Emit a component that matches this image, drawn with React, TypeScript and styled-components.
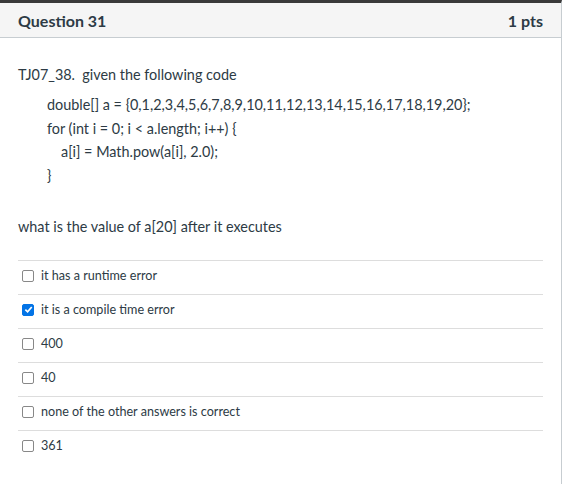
import React from 'react'
import styled, { createGlobalStyle } from 'styled-components'

const GlobalStyle = createGlobalStyle`
  html, body {
    margin: 0;
    padding: 0;
    background: #fff;
  }
  body {
    font-family: Lato, "Open Sans", "Liberation Sans", sans-serif;
    color: #2d3b45;
    overflow: hidden;
  }
`

const Card = styled.div`
  box-sizing: border-box;
  width: 563px;
  margin-left: -1px;
  min-height: 484px;
  border: 1px solid #c7cdd1;
  border-top: 3px solid #3a3a3a;
  border-bottom: none;
`

const Header = styled.div`
  display: flex;
  justify-content: space-between;
  align-items: center;
  height: 34px;
  padding: 0 18px;
  background: #f5f5f5;
  border-bottom: 1px solid #c7cdd1;
  font-weight: 700;
  font-size: 16px;
`

const Body = styled.div`
  padding: 26px 18px 0;
  font-size: 14.4px;
`

const Text = styled.p<{ $gap?: number }>`
  margin: 0;
  margin-top: ${p => p.$gap ?? 0}px;
  line-height: 21px;
`

const Code = styled.div`
  margin: 8px 0 0 29px;
  line-height: 23.7px;
`

const Line = styled.div<{ $indent?: number }>`
  padding-left: ${p => p.$indent ?? 0}px;
  white-space: pre;
`

const Answers = styled.ul`
  list-style: none;
  margin: 23px 0 0;
  padding: 0;
`

const Answer = styled.li`
  display: flex;
  align-items: center;
  gap: 7px;
  height: 34px;
  box-sizing: border-box;
  padding: 0 0 3px 4px;
  border-top: 1px solid #dddddd;
  font-size: 12.6px;
`

const Box = styled.span<{ $checked?: boolean }>`
  box-sizing: border-box;
  width: 12px;
  height: 12px;
  border-radius: 2px;
  border: 1px solid ${p => (p.$checked ? '#0374e6' : '#888')};
  background: ${p => (p.$checked ? '#0374e6' : '#fff')};
  display: flex;
  align-items: center;
  justify-content: center;
`

const answers = [
  { label: 'it has a runtime error', checked: false },
  { label: 'it is a compile time error', checked: true },
  { label: '400', checked: false },
  { label: '40', checked: false },
  { label: 'none of the other answers is correct', checked: false },
  { label: '361', checked: false },
]

export default function App() {
  return (
    <>
      <GlobalStyle />
      <Card>
        <Header>
          <span>Question 31</span>
          <span>1 pts</span>
        </Header>
        <Body>
          <Text>TJ07_38.&nbsp; given the following code</Text>
          <Code>
            <Line>double[] a = {'{'}0,1,2,3,4,5,6,7,8,9,10,11,12,13,14,15,16,17,18,19,20{'}'};</Line>
            <Line>for (int i = 0; i &lt; a.length; i++) {'{'}</Line>
            <Line $indent={14}>a[i] = Math.pow(a[i], 2.0);</Line>
            <Line>{'}'}</Line>
          </Code>
          <Text $gap={28}>what is the value of a[20] after it executes</Text>
          <Answers>
            {answers.map(a => (
              <Answer key={a.label}>
                <Box $checked={a.checked}>
                  {a.checked && (
                    <svg width="9" height="9" viewBox="0 0 10 10">
                      <path d="M1.5 5.2 L4 7.6 L8.6 2.2" fill="none" stroke="#fff" strokeWidth="1.9" />
                    </svg>
                  )}
                </Box>
                <span>{a.label}</span>
              </Answer>
            ))}
          </Answers>
        </Body>
      </Card>
    </>
  )
}
